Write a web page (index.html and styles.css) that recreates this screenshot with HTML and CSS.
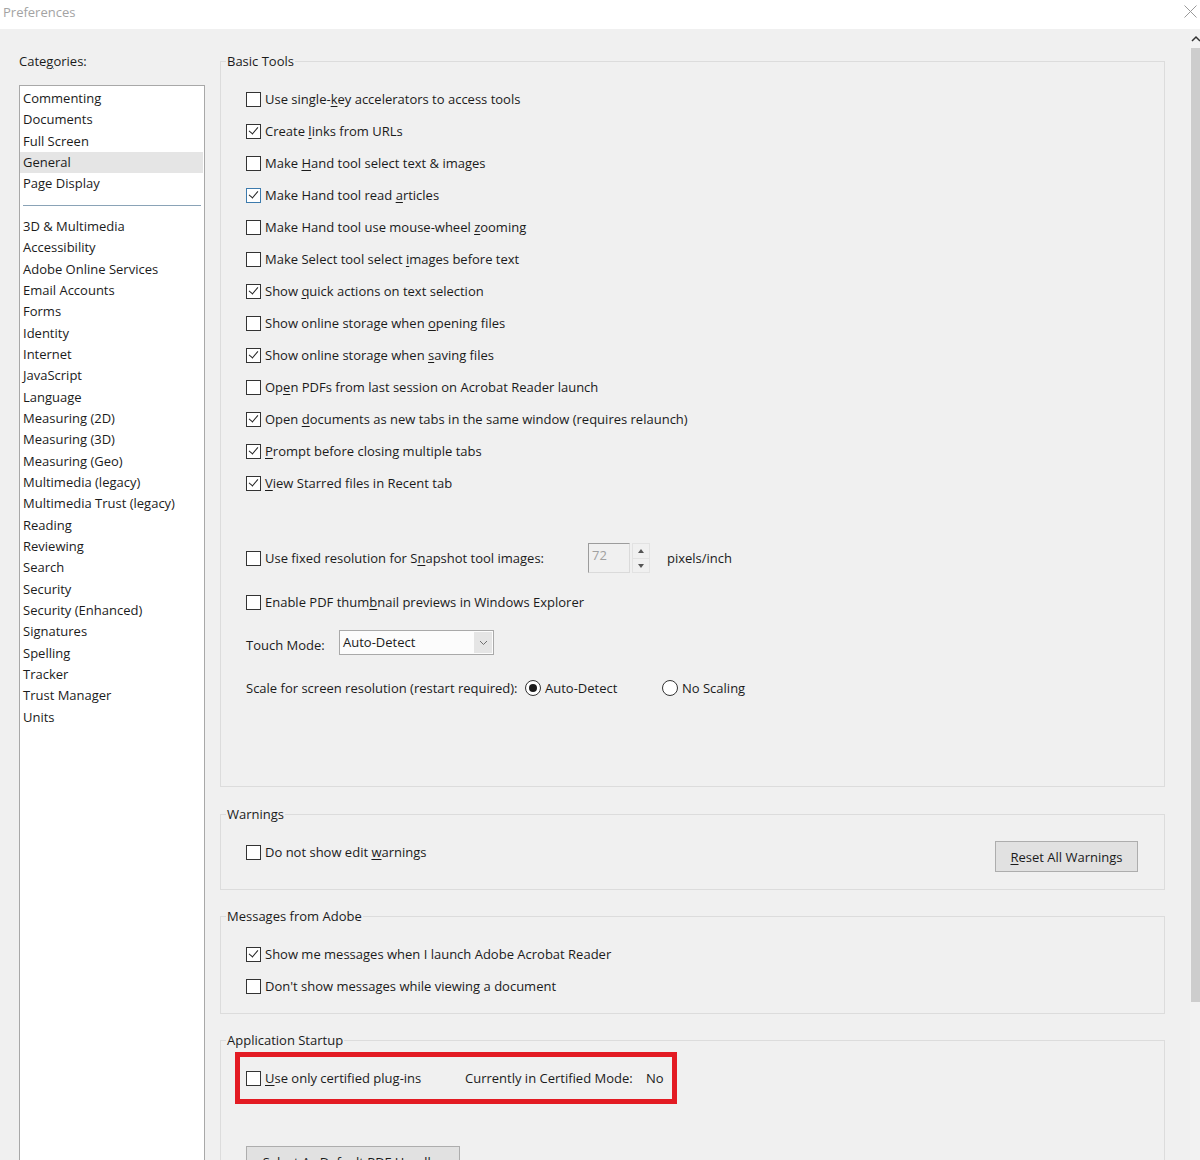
FILE: index.html
```html
<!DOCTYPE html>
<html lang="en">

<head>
    <meta charset="UTF-8">
    <title>Preferences</title>
    <link rel="stylesheet" href="styles.css">
</head>

<body>
    <div class="titlebar">
        <span class="title">Preferences</span>
        <svg class="close" width="13" height="13" viewBox="0 0 13 13">
            <path d="M0.5 0.5L12.5 12.5M12.5 0.5L0.5 12.5" stroke="#9a9a9a" stroke-width="1" fill="none"/>
        </svg>
    </div>

    <div class="window">
        <div class="content">
            <div class="sidebar">
                <div class="cat-label">Cate<u>g</u>ories:</div>
                <ul class="cat-list">
                    <li>Commenting</li>
                    <li>Documents</li>
                    <li>Full Screen</li>
                    <li class="selected">General</li>
                    <li>Page Display</li>
                    <li class="sep"></li>
                    <li>3D &amp; Multimedia</li>
                    <li>Accessibility</li>
                    <li>Adobe Online Services</li>
                    <li>Email Accounts</li>
                    <li>Forms</li>
                    <li>Identity</li>
                    <li>Internet</li>
                    <li>JavaScript</li>
                    <li>Language</li>
                    <li>Measuring (2D)</li>
                    <li>Measuring (3D)</li>
                    <li>Measuring (Geo)</li>
                    <li>Multimedia (legacy)</li>
                    <li>Multimedia Trust (legacy)</li>
                    <li>Reading</li>
                    <li>Reviewing</li>
                    <li>Search</li>
                    <li>Security</li>
                    <li>Security (Enhanced)</li>
                    <li>Signatures</li>
                    <li>Spelling</li>
                    <li>Tracker</li>
                    <li>Trust Manager</li>
                    <li>Units</li>
                </ul>
            </div>

            <div class="panel">
                <fieldset class="group basic">
                    <legend>Basic Tools</legend>
                    <div class="opt"><span class="box"></span><span>Use single-<u>k</u>ey accelerators to access tools</span></div>
                    <div class="opt"><span class="box on"></span><span>Create <u>l</u>inks from URLs</span></div>
                    <div class="opt"><span class="box"></span><span>Make <u>H</u>and tool select text &amp; images</span></div>
                    <div class="opt"><span class="box on hot"></span><span>Make Hand tool read <u>a</u>rticles</span></div>
                    <div class="opt"><span class="box"></span><span>Make Hand tool use mouse-wheel <u>z</u>ooming</span></div>
                    <div class="opt"><span class="box"></span><span>Make Select tool select <u>i</u>mages before text</span></div>
                    <div class="opt"><span class="box on"></span><span>Show <u>q</u>uick actions on text selection</span></div>
                    <div class="opt"><span class="box"></span><span>Show online storage when <u>o</u>pening files</span></div>
                    <div class="opt"><span class="box on"></span><span>Show online storage when <u>s</u>aving files</span></div>
                    <div class="opt"><span class="box"></span><span>Op<u>e</u>n PDFs from last session on Acrobat Reader launch</span></div>
                    <div class="opt"><span class="box on"></span><span>Open <u>d</u>ocuments as new tabs in the same window (requires relaunch)</span></div>
                    <div class="opt"><span class="box on"></span><span><u>P</u>rompt before closing multiple tabs</span></div>
                    <div class="opt"><span class="box on"></span><span><u>V</u>iew Starred files in Recent tab</span></div>

                    <div class="row snapshot">
                        <div class="opt snap-label"><span class="box"></span><span>Use fixed resolution for S<u>n</u>apshot tool images:</span></div>
                        <div class="spinner">72</div>
                        <div class="spin-btns">
                            <span class="spin up"></span>
                            <span class="spin down"></span>
                        </div>
                        <span class="unit">pixels/inch</span>
                    </div>

                    <div class="opt thumbs"><span class="box"></span><span>Enable PDF thum<u>b</u>nail previews in Windows Explorer</span></div>

                    <div class="row touch">
                        <span class="touch-label">Touch Mode:</span>
                        <div class="select">
                            <span class="select-text">Auto-Detect</span>
                            <span class="select-arrow">
                                <svg width="9" height="6" viewBox="0 0 9 6"><path d="M1 1L4.5 4.5L8 1" stroke="#707070" fill="none"/></svg>
                            </span>
                        </div>
                    </div>

                    <div class="row scale">
                        <span class="scale-label">Scale for screen resolution (restart required):</span>
                        <span class="radio-opt first"><span class="radio on"></span><span>Auto-Detect</span></span>
                        <span class="radio-opt"><span class="radio"></span><span>No Scaling</span></span>
                    </div>
                </fieldset>

                <fieldset class="group warnings">
                    <legend>Warnings</legend>
                    <div class="row warn-row">
                        <div class="opt"><span class="box"></span><span>Do not show edit <u>w</u>arnings</span></div>
                        <div class="btn reset"><span><u>R</u>eset All Warnings</span></div>
                    </div>
                </fieldset>

                <fieldset class="group messages">
                    <legend>Messages from Adobe</legend>
                    <div class="opt"><span class="box on"></span><span>Show me messages when I launch Adobe Acrobat Reader</span></div>
                    <div class="opt"><span class="box"></span><span>Don't show messages while viewing a document</span></div>
                </fieldset>

                <fieldset class="group startup">
                    <legend>Application Startup</legend>
                    <div class="highlight">
                        <div class="opt certified"><span class="box"></span><span><u>U</u>se only certified plug-ins</span></div>
                        <span class="mode-label">Currently in Certified Mode:</span>
                        <span>No</span>
                    </div>
                    <div class="btn default-btn">Select As Default PDF Handler</div>
                </fieldset>
            </div>
        </div>

        <div class="scrollbar">
            <div class="scroll-up">
                <svg width="10" height="8" viewBox="0 0 10 8"><path d="M2 6L6 2L10 6" stroke="#333" stroke-width="1.5" fill="none"/></svg>
            </div>
            <div class="thumb"></div>
        </div>
    </div>
</body>

</html>
```

FILE: styles.css
```css
body {
    margin: 0;
    height: 1160px;
    overflow: hidden;
    background: #f0f0f0;
    font-family: "Open Sans", "Noto Sans", sans-serif;
    font-size: 13px;
    color: #1b1b1b;
}

u {
    text-decoration: underline;
    text-underline-offset: 2px;
}

/* title bar */
.titlebar {
    height: 29px;
    background: #fff;
    display: flex;
    align-items: center;
    justify-content: space-between;
}

.titlebar .title {
    padding-left: 3px;
    margin-top: -5px;
    color: #a3a3a3;
    font-size: 13px;
}

.titlebar .close {
    margin-right: 3px;
    margin-top: -7px;
}

.window {
    display: flex;
    height: 1131px;
}

.content {
    flex: 1;
    display: flex;
    padding: 22px 25px 0 19px;
}

/* categories */
.sidebar {
    width: 186px;
    flex-shrink: 0;
}

.cat-label {
    line-height: 20px;
    margin-bottom: 14px;
}

.cat-list {
    list-style: none;
    margin: 0;
    padding: 2px 0 0;
    border: 1px solid #a8a8a8;
    background: #fff;
    height: 1100px;
}

.cat-list li {
    line-height: 21.33px;
    height: 21.33px;
    padding-left: 3px;
    white-space: nowrap;
}

.cat-list .selected {
    background: #e5e5e5;
    margin-right: 1px;
}

.cat-list .sep {
    display: flex;
    align-items: center;
    padding: 0 3px;
}

.cat-list .sep:after {
    content: '';
    flex: 1;
    border-top: 1px solid #8aa3b7;
}

/* group boxes */
.panel {
    width: 945px;
    margin-left: 15px;
    flex-shrink: 0;
}

.group {
    margin: 0;
    min-width: 0;
    border: 1px solid #dcdcdc;
    padding: 12px 25px 0;
}

.group legend {
    padding: 0 1px;
    margin-left: -20px;
    line-height: 20px;
}

.basic {
    padding-bottom: 82px;
}

.warnings {
    margin-top: 17px;
    padding-bottom: 17px;
}

.messages {
    margin-top: 16px;
    padding-bottom: 11px;
}

.startup {
    margin-top: 16px;
    padding-top: 2px;
    padding-bottom: 20px;
}

/* checkboxes */
.opt {
    display: flex;
    align-items: center;
    height: 32px;
    white-space: nowrap;
}

.box {
    width: 13px;
    height: 13px;
    border: 1px solid #333;
    background: #fff;
    margin-right: 4px;
    flex-shrink: 0;
    position: relative;
}

.box.hot {
    border-color: #3d7bad;
}

.box.on:after {
    content: '';
    position: absolute;
    left: 4px;
    top: 0px;
    width: 4px;
    height: 8px;
    border-right: 1.3px solid #222;
    border-bottom: 1.3px solid #222;
    transform: rotate(40deg);
}

.row {
    display: flex;
    align-items: center;
    white-space: nowrap;
}

/* snapshot row */
.snapshot {
    margin-top: 44px;
    height: 30px;
}

.snap-label {
    width: 342px;
    height: 30px;
}

.spinner {
    width: 42px;
    height: 30px;
    box-sizing: border-box;
    border: 1px solid #dadada;
    border-top-color: #9c9c9c;
    border-left-color: #9c9c9c;
    color: #a0a0a0;
    line-height: 20px;
    padding: 1px 3px;
    align-self: flex-start;
}

.spin-btns {
    margin-left: 2px;
    width: 18px;
    height: 30px;
    display: flex;
    flex-direction: column;
    align-self: flex-start;
}

.spin {
    flex: 1;
    border: 1px solid #e2e2e2;
    position: relative;
}

.spin.up {
    border-bottom: none;
}

.spin:after {
    content: '';
    position: absolute;
    left: 5px;
    top: 5px;
    border-left: 3.5px solid transparent;
    border-right: 3.5px solid transparent;
}

.spin.up:after {
    border-bottom: 4px solid #555;
}

.spin.down:after {
    border-top: 4px solid #555;
}

.unit {
    margin-left: 17px;
}

.thumbs {
    margin-top: 13px;
}

/* touch mode */
.touch {
    margin-top: 11px;
    height: 32px;
}

.touch-label {
    width: 93px;
}

.select {
    width: 155px;
    height: 25px;
    box-sizing: border-box;
    border: 1px solid #a9a9a9;
    background: #fcfcfc;
    display: flex;
    align-self: flex-start;
    margin-top: 1px;
}

.select-text {
    flex: 1;
    padding-left: 3px;
    line-height: 22px;
}

.select-arrow {
    width: 18px;
    margin: 1px;
    background: #e5e5e5;
    display: flex;
    align-items: center;
    justify-content: center;
}

/* scale */
.scale {
    margin-top: 11px;
    height: 32px;
}

.scale-label {
    width: 279px;
}

.radio-opt {
    display: flex;
    align-items: center;
}

.radio-opt.first {
    width: 137px;
}

.radio {
    width: 14px;
    height: 14px;
    border: 1px solid #333;
    border-radius: 50%;
    background: #fff;
    margin-right: 4px;
    display: flex;
    align-items: center;
    justify-content: center;
}

.radio.on:after {
    content: '';
    width: 8px;
    height: 8px;
    border-radius: 50%;
    background: #1b1b1b;
}

/* buttons */
.btn {
    height: 31px;
    box-sizing: border-box;
    border: 1px solid #adadad;
    background: #e1e1e1;
    display: flex;
    align-items: center;
    justify-content: center;
}

.warn-row {
    justify-content: space-between;
    align-items: flex-start;
}

.reset {
    width: 143px;
    margin-top: 5px;
    margin-right: 1px;
}

/* startup */
.highlight {
    display: flex;
    align-items: center;
    width: 442px;
    height: 52px;
    box-sizing: border-box;
    border: 5px solid #e31b23;
    margin-left: -11px;
    padding-left: 6px;
    white-space: nowrap;
}

.certified {
    width: 219px;
}

.mode-label {
    width: 181px;
}

.default-btn {
    width: 214px;
    margin-top: 42px;
}

/* scrollbar */
.scrollbar {
    width: 10px;
    flex-shrink: 0;
    background: #f2f2f2;
}

.scroll-up {
    height: 19px;
    display: flex;
    align-items: center;
    overflow: hidden;
}

.thumb {
    height: 954px;
    margin-left: 1px;
    background: #cdcdcd;
}
```
